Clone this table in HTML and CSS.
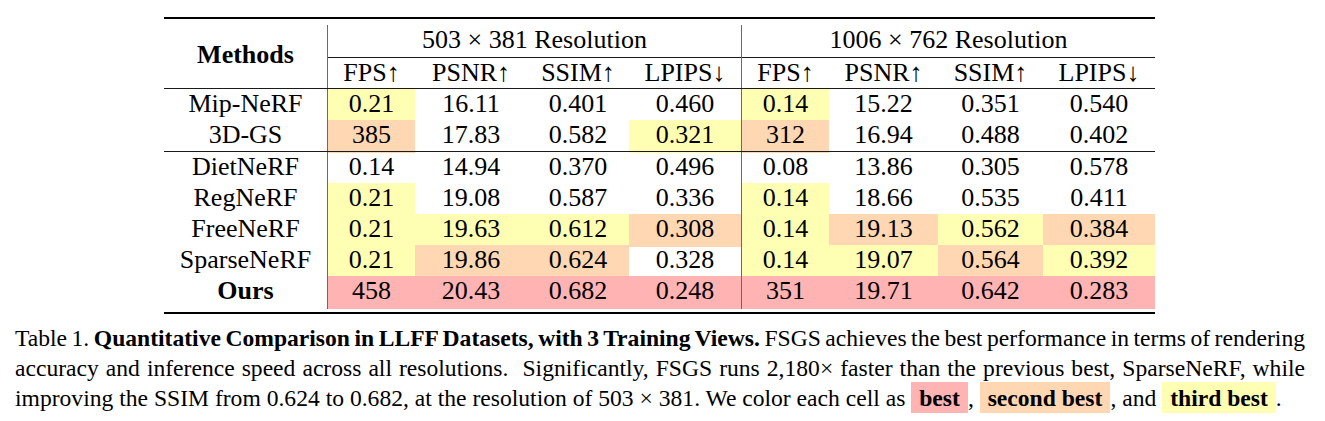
FILE: index.html
```html
<!DOCTYPE html>
<html>
<head>
<meta charset="utf-8">
<link rel="stylesheet" href="styles.css">
</head>
<body>
<div class="page">
  <div class="tbl">
    <div class="rule thick"></div>
    <div class="head">
      <div class="methods">Methods</div>
      <div class="vl head-vl"></div>
      <div class="grp">
        <div class="grp-title">503 × 381 Resolution</div>
        <div class="rule thin"></div>
        <div class="sub sub-a">
          <div class="cell">FPS↑</div>
          <div class="cell">PSNR↑</div>
          <div class="cell">SSIM↑</div>
          <div class="cell">LPIPS↓</div>
        </div>
      </div>
      <div class="vl head-vl"></div>
      <div class="grp">
        <div class="grp-title">1006 × 762 Resolution</div>
        <div class="rule thin"></div>
        <div class="sub sub-b">
          <div class="cell">FPS↑</div>
          <div class="cell">PSNR↑</div>
          <div class="cell">SSIM↑</div>
          <div class="cell">LPIPS↓</div>
        </div>
      </div>
    </div>
    <div class="rule thin"></div>

    <div class="row">
      <div class="cell name">Mip-NeRF</div><div class="vl"></div>
      <div class="cell c3">0.21</div><div class="cell">16.11</div><div class="cell">0.401</div><div class="cell">0.460</div><div class="vl"></div>
      <div class="cell c3">0.14</div><div class="cell">15.22</div><div class="cell">0.351</div><div class="cell">0.540</div>
    </div>
    <div class="row">
      <div class="cell name">3D-GS</div><div class="vl"></div>
      <div class="cell c2">385</div><div class="cell">17.83</div><div class="cell">0.582</div><div class="cell c3">0.321</div><div class="vl"></div>
      <div class="cell c2">312</div><div class="cell">16.94</div><div class="cell">0.488</div><div class="cell">0.402</div>
    </div>

    <div class="rule thin"></div>

    <div class="row">
      <div class="cell name">DietNeRF</div><div class="vl"></div>
      <div class="cell">0.14</div><div class="cell">14.94</div><div class="cell">0.370</div><div class="cell">0.496</div><div class="vl"></div>
      <div class="cell">0.08</div><div class="cell">13.86</div><div class="cell">0.305</div><div class="cell">0.578</div>
    </div>
    <div class="row">
      <div class="cell name">RegNeRF</div><div class="vl"></div>
      <div class="cell c3">0.21</div><div class="cell">19.08</div><div class="cell">0.587</div><div class="cell">0.336</div><div class="vl"></div>
      <div class="cell c3">0.14</div><div class="cell">18.66</div><div class="cell">0.535</div><div class="cell">0.411</div>
    </div>
    <div class="row">
      <div class="cell name">FreeNeRF</div><div class="vl"></div>
      <div class="cell c3">0.21</div><div class="cell c3">19.63</div><div class="cell c3">0.612</div><div class="cell c2">0.308</div><div class="vl"></div>
      <div class="cell c3">0.14</div><div class="cell c2">19.13</div><div class="cell c3">0.562</div><div class="cell c2">0.384</div>
    </div>
    <div class="row">
      <div class="cell name">SparseNeRF</div><div class="vl"></div>
      <div class="cell c3">0.21</div><div class="cell c2">19.86</div><div class="cell c2">0.624</div><div class="cell">0.328</div><div class="vl"></div>
      <div class="cell c3">0.14</div><div class="cell c3">19.07</div><div class="cell c2">0.564</div><div class="cell c3">0.392</div>
    </div>
    <div class="row">
      <div class="cell name bold">Ours</div><div class="vl"></div>
      <div class="cell c1">458</div><div class="cell c1">20.43</div><div class="cell c1">0.682</div><div class="cell c1">0.248</div><div class="vl"></div>
      <div class="cell c1">351</div><div class="cell c1">19.71</div><div class="cell c1">0.642</div><div class="cell c1">0.283</div>
    </div>
    <div class="bottom-gap"></div>
    <div class="rule thick"></div>
  </div>

  <div class="caption">
    <div class="cap-line just tight">Table 1. <b>Quantitative Comparison in LLFF Datasets, with 3 Training Views.</b> FSGS achieves the best performance in terms of rendering</div>
    <div class="cap-line just">accuracy and inference speed across all resolutions.&nbsp; Significantly, FSGS runs 2,180× faster than the previous best, SparseNeRF, while</div>
    <div class="cap-line">improving the SSIM from 0.624 to 0.682, at the resolution of 503 × 381. We color each cell as <span class="tag c1">best</span>, <span class="tag c2">second best</span>, and <span class="tag c3">third best</span>.</div>
  </div>
</div>
</body>
</html>
```

FILE: styles.css
```css
html, body {
  margin: 0;
  padding: 0;
  background: #ffffff;
}

body {
  font-family: "Liberation Serif", "Times New Roman", serif;
  color: #000000;
}

.page {
  padding-top: 17px;
}

.tbl {
  width: 991px;
  margin-left: 164px;
  display: flex;
  flex-direction: column;
  font-size: 26px;
}

.rule.thick {
  height: 2px;
  background: #000000;
}

.rule.thin {
  height: 1px;
  background: #1a1a1a;
}

.head {
  display: flex;
  height: 69px;
}

.methods {
  width: 163px;
  margin-top: 6px;
  padding-bottom: 3px;
  box-sizing: border-box;
  display: flex;
  align-items: center;
  justify-content: center;
  font-weight: bold;
}

.vl {
  width: 1px;
  background: #6a6a6a;
}

.head-vl {
  margin-top: 6px;
}

.grp {
  width: 413px;
  display: flex;
  flex-direction: column;
}

.grp-title {
  height: 38px;
  padding-top: 6px;
  padding-bottom: 2px;
  box-sizing: border-box;
  display: flex;
  align-items: center;
  justify-content: center;
}

.sub {
  display: grid;
  height: 30px;
}

.sub-a {
  grid-template-columns: 87px 112px 102px 112px;
}

.sub-b {
  grid-template-columns: 87px 109px 105px 112px;
}

.row {
  display: grid;
  grid-template-columns: 163px 1px 87px 112px 102px 112px 1px 87px 109px 105px 112px;
  height: 31px;
}

.cell {
  display: flex;
  align-items: center;
  justify-content: center;
  padding-bottom: 3px;
  box-sizing: border-box;
  white-space: nowrap;
}

.bold {
  font-weight: bold;
}

.c1 {
  background: #ffb3b3;
}

.c2 {
  background: #ffd8b3;
}

.c3 {
  background: #ffffb3;
}

.bottom-gap {
  height: 5px;
}

.caption {
  width: 1290px;
  margin-left: 15px;
  margin-top: 9px;
  font-size: 23.6px;
  line-height: 30px;
}

.cap-line {
  white-space: nowrap;
}

.cap-line.just {
  text-align: justify;
  text-align-last: justify;
  white-space: normal;
}

.cap-line.tight {
  word-spacing: -2.5px;
}

.tag {
  font-weight: bold;
  padding: 3px 8px 3px 8px;
}
```
